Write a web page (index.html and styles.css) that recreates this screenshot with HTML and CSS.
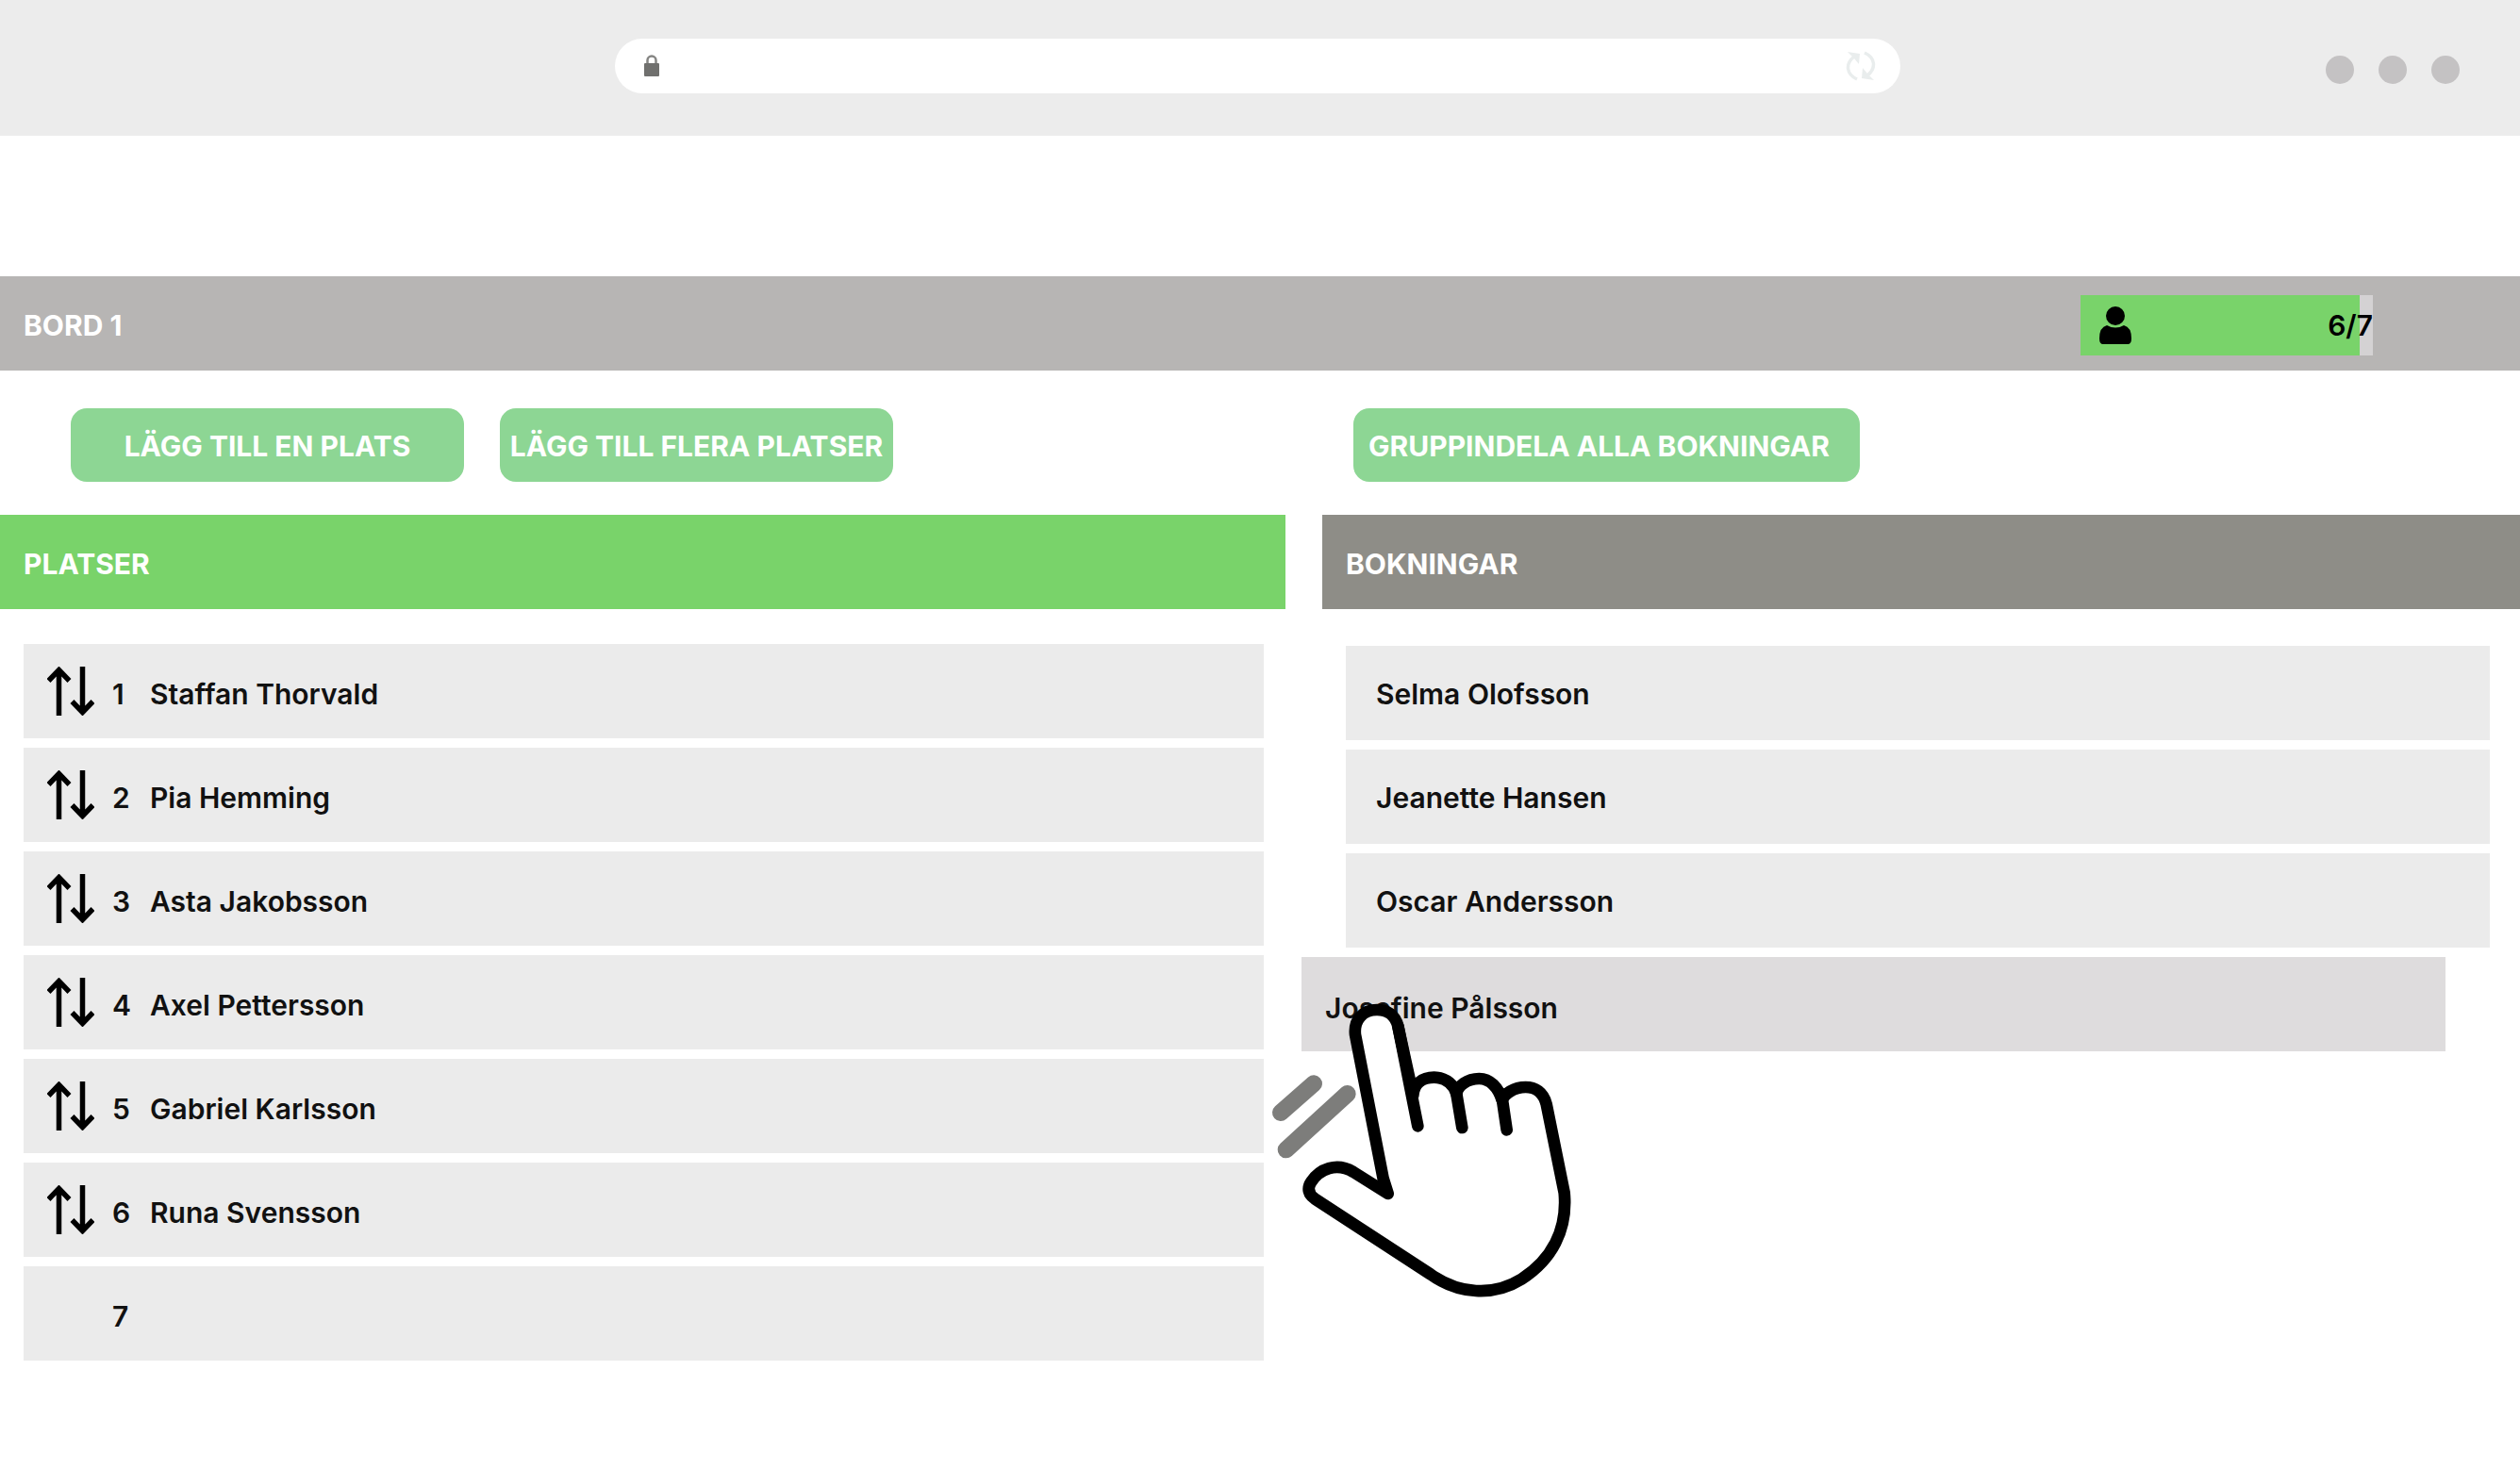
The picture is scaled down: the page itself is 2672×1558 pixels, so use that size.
FILE: index.html
```html
<!DOCTYPE html>
<html lang="sv">
<head>
<meta charset="utf-8">
<meta name="viewport" content="width=device-width, initial-scale=1">
<title>Bord 1</title>
<link rel="stylesheet" href="styles.css">
</head>
<body>
<svg class="sprite" aria-hidden="true">
  <symbol id="swap" viewBox="0 0 50 52">
    <path d="M12.500 52V4M1.500 15L12.500 3.500L23.500 15M37.500 0V48M26.500 37L37.500 48.500L48.500 37" fill="none" stroke="#000" stroke-width="5.500"/>
  </symbol>
</svg>

<header class="browser">
  <div class="address">
    <svg class="lock" viewBox="0 0 18 24" aria-hidden="true">
      <path d="M4.500 10V6a4.500 4.500 0 0 1 9 0v4" fill="none" stroke="#858583" stroke-width="2.500"/>
      <rect x="1" y="9" width="16" height="14" rx="1" fill="#70706e"/>
    </svg>
    <input class="address-input" type="text" aria-label="Adress">
    <button class="reload" type="button" aria-label="Ladda om">
      <svg viewBox="0 0 32 32" aria-hidden="true">
        <g fill="none" stroke="#e9eded" stroke-width="3.500">
          <path d="M12 30C1 25-1 14 9 6"/>
          <path d="M20 2c11 5 13 16 3 24"/>
        </g>
        <path d="M2 1l13 2-1 11-5-6z M30 31l-13-2 1-11 5 6z" fill="#e9eded"/>
      </svg>
    </button>
  </div>
  <div class="dots"><span></span><span></span><span></span></div>
</header>

<main>
  <section class="table-bar">
    <h1>BORD 1</h1>
    <div class="occupancy" role="meter" aria-label="Platser" aria-valuemin="0" aria-valuemax="7" aria-valuenow="6">
      <svg class="person" viewBox="0 0 34 40" aria-hidden="true">
        <circle cx="17" cy="10" r="10"/>
        <path d="M8 20q9 5 18 0q8 2 8 14q0 6-4 6H4q-4 0-4-6q0-12 8-14z"/>
      </svg>
      <span>6/7</span>
    </div>
  </section>

  <div class="columns">
    <section class="seats">
      <div class="actions">
        <button class="action" type="button">LÄGG TILL EN PLATS</button>
        <button class="action" type="button">LÄGG TILL FLERA PLATSER</button>
      </div>
      <h2>PLATSER</h2>
      <ol class="list">
        <li class="row"><svg class="swap"><use href="#swap"/></svg><span class="number">1</span><span>Staffan Thorvald</span></li>
        <li class="row"><svg class="swap"><use href="#swap"/></svg><span class="number">2</span><span>Pia Hemming</span></li>
        <li class="row"><svg class="swap"><use href="#swap"/></svg><span class="number">3</span><span>Asta Jakobsson</span></li>
        <li class="row"><svg class="swap"><use href="#swap"/></svg><span class="number">4</span><span>Axel Pettersson</span></li>
        <li class="row"><svg class="swap"><use href="#swap"/></svg><span class="number">5</span><span>Gabriel Karlsson</span></li>
        <li class="row"><svg class="swap"><use href="#swap"/></svg><span class="number">6</span><span>Runa Svensson</span></li>
        <li class="row"><span class="number">7</span></li>
      </ol>
    </section>

    <section class="bookings">
      <div class="actions">
        <button class="action" type="button">GRUPPINDELA ALLA BOKNINGAR</button>
      </div>
      <h2>BOKNINGAR</h2>
      <ul class="list">
        <li class="row"><span>Selma Olofsson</span></li>
        <li class="row"><span>Jeanette Hansen</span></li>
        <li class="row"><span>Oscar Andersson</span></li>
        <li class="row dragged">
          <span>Josefine Pålsson</span>
          <svg class="hand" viewBox="0 0 1200 1200" aria-hidden="true">
            <g fill="none" stroke="#7d7d7b" stroke-width="54" stroke-linecap="round">
              <path d="M114 540L219 448M131 658L326 480"/>
            </g>
            <g stroke="#000" stroke-width="38" stroke-linecap="round" stroke-linejoin="round">
              <path fill="#fff" d="M535 485L487 265C478 228 452 213 420 213C376 213 346 244 351 292L440 750L455 798L345 729C290 697 238 720 211 760C196 782 203 801 222 814L590 1054C680 1118 790 1126 880 1070C975 1009 1027 915 1016 795L959 513C949 474 922 459 893 459C855 459 825 481 818 500C806 460 780 432 745 432C707 432 677 455 673 480C666 455 642 428 602 428C563 428 537 450 535 485Z"/>
              <path fill="none" d="M487 265L550 583M673 480L691 588M816 480L833 595"/>
            </g>
          </svg>
        </li>
      </ul>
    </section>
  </div>
</main>
</body>
</html>
```
FILE: styles.css
```css
* {
  box-sizing: border-box;
}

body {
  margin: 0;
  background: #fff;
  color: #111;
  font-family: Inter, "Open Sans", sans-serif;
  font-size: 30px;
  font-weight: 600;
  line-height: 36px;
}

h1,
h2 {
  margin: 0;
  color: #fff;
  font-size: 30px;
  font-weight: 700;
  line-height: 36px;
}

ol,
ul {
  margin: 0;
  padding: 0;
  list-style: none;
}

.sprite {
  display: none;
}

.browser {
  display: grid;
  grid-template-columns: 652fr 1363fr 657fr;
  align-items: start;
  padding: 41px 0 45px;
  background: #ececec;
}

.address {
  grid-column: 2;
  display: flex;
  align-items: center;
  height: 58px;
  padding: 0 26px 0 30px;
  border-radius: 29px;
  background: #fff;
}

.lock {
  width: 18px;
  height: 24px;
}

.address-input {
  flex: 1;
  min-width: 0;
  border: 0;
  outline: 0;
  background: transparent;
  font: inherit;
}

.reload {
  width: 32px;
  height: 32px;
  padding: 0;
  border: 0;
  background: none;
}

.reload svg {
  display: block;
}

.dots {
  display: flex;
  justify-content: flex-end;
  gap: 26px;
  padding: 18px 64px 0 0;
}

.dots span {
  width: 30px;
  height: 30px;
  border-radius: 50%;
  background: #c4c2c3;
}

.table-bar {
  display: flex;
  align-items: center;
  justify-content: space-between;
  min-height: 100px;
  margin-top: 149px;
  padding: 4px 156px 0 25px;
  background: #b7b5b4;
}

.occupancy {
  display: flex;
  align-items: center;
  justify-content: space-between;
  width: 310px;
  height: 64px;
  padding-left: 20px;
  background: linear-gradient(to right, #79d36a 296px, #d4d2d3 296px);
  color: #000;
}

.person {
  width: 34px;
  height: 40px;
}

.columns {
  display: grid;
  grid-template-columns: minmax(0, 1363fr) minmax(0, 1270fr);
  gap: 39px;
}

.actions {
  display: flex;
  gap: 38px;
  padding: 40px 0 35px 75px;
}

.action {
  width: 417px;
  height: 78px;
  padding: 2px 0 0;
  border: 0;
  border-radius: 17px;
  background: #8dd694;
  color: #fff;
  font: inherit;
  font-weight: 700;
  white-space: nowrap;
}

h2 {
  padding: 34px 25px 30px;
  background: #79d36a;
}

.list {
  display: flex;
  flex-direction: column;
  gap: 10px;
  padding: 37px 23px 0 25px;
}

.row {
  display: grid;
  grid-template-columns: 50px 21px 1fr;
  column-gap: 19px;
  align-items: center;
  min-height: 100px;
  padding-left: 25px;
  background: #ebebeb;
}

.row span {
  padding-top: 6px;
}

.number {
  grid-column: 2;
}

.swap {
  width: 50px;
  height: 52px;
}

.bookings .actions {
  padding-left: 33px;
}

.bookings .action {
  width: 537px;
  padding-right: 16px;
}

.bookings h2 {
  background: #8e8d87;
}

.bookings .list {
  padding: 39px 32px 0 25px;
}

.bookings .row {
  display: flex;
  padding-left: 32px;
}

.bookings .row span {
  padding-top: 2px;
}

.bookings .dragged {
  position: relative;
  left: -47px;
  padding-left: 25px;
  background: #dedcdd;
}

.bookings .dragged span {
  padding-top: 8px;
}

.hand {
  position: absolute;
  top: -15px;
  left: -60px;
  width: 400px;
  height: 400px;
}
```
